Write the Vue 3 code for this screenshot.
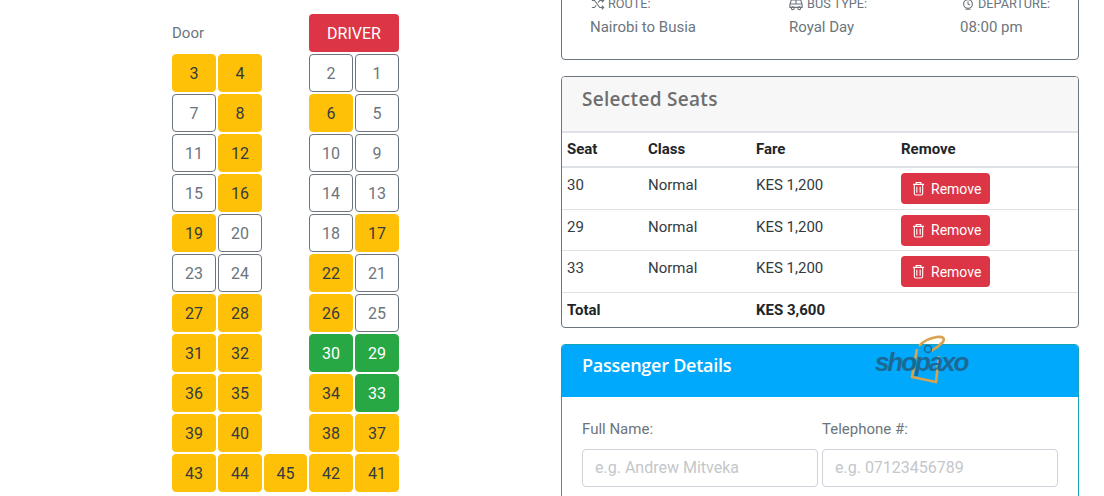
<script setup>
const seats = [
  { n: 3, s: 'y' }, { n: 4, s: 'y' }, null, { n: 2 }, { n: 1 },
  { n: 7 }, { n: 8, s: 'y' }, null, { n: 6, s: 'y' }, { n: 5 },
  { n: 11 }, { n: 12, s: 'y' }, null, { n: 10 }, { n: 9 },
  { n: 15 }, { n: 16, s: 'y' }, null, { n: 14 }, { n: 13 },
  { n: 19, s: 'y' }, { n: 20 }, null, { n: 18 }, { n: 17, s: 'y' },
  { n: 23 }, { n: 24 }, null, { n: 22, s: 'y' }, { n: 21 },
  { n: 27, s: 'y' }, { n: 28, s: 'y' }, null, { n: 26, s: 'y' }, { n: 25 },
  { n: 31, s: 'y' }, { n: 32, s: 'y' }, null, { n: 30, s: 'g' }, { n: 29, s: 'g' },
  { n: 36, s: 'y' }, { n: 35, s: 'y' }, null, { n: 34, s: 'y' }, { n: 33, s: 'g' },
  { n: 39, s: 'y' }, { n: 40, s: 'y' }, null, { n: 38, s: 'y' }, { n: 37, s: 'y' },
  { n: 43, s: 'y' }, { n: 44, s: 'y' }, { n: 45, s: 'y' }, { n: 42, s: 'y' }, { n: 41, s: 'y' }
]
const picked = ['30', '29', '33']
</script>

<template>
  <div class="page">
    <section class="deck">
      <div class="door">Door</div>
      <div class="driver">DRIVER</div>
      <template v-for="(seat, i) in seats" :key="i">
        <div v-if="seat" class="seat" :class="seat.s">{{ seat.n }}</div>
        <div v-else></div>
      </template>
    </section>

    <section class="side">
      <div class="card trip">
        <div class="trip-col">
          <div class="lab">
            <svg class="tic" viewBox="0 0 16 16" fill="none" stroke="currentColor" stroke-width="1.3">
              <path d="M1 4h3l6 8h4M1 12h3l2-2.6M8 6.4 10 4h4M12.4 2 14.5 4l-2.1 2M12.4 10l2.1 2-2.1 2" />
            </svg>
            ROUTE:
          </div>
          <div class="val">Nairobi to Busia</div>
        </div>
        <div class="trip-col">
          <div class="lab">
            <svg class="tic bus" viewBox="0 0 16 16" fill="none" stroke="currentColor" stroke-width="1.2">
              <path d="M3 3h10l1.5 5v3h-13V8zM1.500 7.500h13M8 3v4.500" />
              <circle cx="4.500" cy="12" r="1.500" />
              <circle cx="11.500" cy="12" r="1.500" />
            </svg>
            BUS TYPE:
          </div>
          <div class="val">Royal Day</div>
        </div>
        <div class="trip-col">
          <div class="lab">
            <svg class="tic" viewBox="0 0 16 16" fill="none" stroke="currentColor" stroke-width="1.3">
              <circle cx="8" cy="8" r="5" />
              <path d="M8 5v3l2 1M5 14h6M6 1.500h4" />
            </svg>
            DEPARTURE:
          </div>
          <div class="val">08:00 pm</div>
        </div>
      </div>

      <div class="card picked">
        <h3 class="head">Selected Seats</h3>
        <table>
          <thead>
            <tr><th class="c1">Seat</th><th class="c2">Class</th><th class="c3">Fare</th><th>Remove</th></tr>
          </thead>
          <tbody>
            <tr v-for="s in picked" :key="s">
              <td>{{ s }}</td>
              <td>Normal</td>
              <td>KES 1,200</td>
              <td>
                <button class="rm">
                  <svg class="trash" viewBox="0 0 14 16" fill="none" stroke="currentColor" stroke-width="1.200">
                    <path d="M1 3.500h12M4.500 3.500V1.500h5v2M2.500 3.500v10a1.500 1.500 0 0 0 1.500 1.500h6a1.500 1.500 0 0 0 1.500-1.500v-10M5.200 6v6.500M8.800 6v6.500" />
                  </svg>
                  Remove
                </button>
              </td>
            </tr>
            <tr class="sum"><td>Total</td><td></td><td>KES 3,600</td><td></td></tr>
          </tbody>
        </table>
      </div>

      <div class="card pass">
        <h3 class="head blue">Passenger Details</h3>
        <div class="logo">
          <svg class="tag" viewBox="0 0 45 50" fill="none" stroke="#d9a24f" stroke-width="2.600">
            <path d="M12 15 7 43l24 5 3-26" />
            <path d="M14 12Q20 5 32 3q9-1 6 5-6 6-12 9" />
            <circle cx="23" cy="15" r="3.500" stroke="#1b6a96" stroke-width="1.500" />
          </svg>
          <span class="logo-text">shopaxo</span>
        </div>
        <div class="form">
          <label>Full Name:<input placeholder="e.g. Andrew Mitveka" /></label>
          <label>Telephone #:<input placeholder="e.g. 07123456789" /></label>
        </div>
      </div>
    </section>
  </div>
</template>

<style>
html, body { margin: 0; background: #fff; overflow: hidden; }
</style>

<style scoped>
.page {
  display: flex;
  align-items: flex-start;
  width: 1104px;
  height: 496px;
  overflow: hidden;
  padding-left: 172px;
  box-sizing: border-box;
  font-family: Roboto, "Liberation Sans", sans-serif;
  color: #6c757d;
}
.deck {
  display: grid;
  grid-template-columns: 44px 44px 43px 44px 44px;
  grid-auto-rows: 38px;
  gap: 2px;
  margin-top: 14px;
}
.door {
  grid-column: 1 / 4;
  font-size: 15px;
  line-height: 38px;
}
.driver {
  grid-column: 4 / 6;
  background: #dc3545;
  color: #fff;
  border-radius: 4px;
  font-size: 16px;
  line-height: 39px;
  text-align: center;
}
.seat {
  border: 1px solid #6c757d;
  border-radius: 4px;
  box-sizing: border-box;
  font-size: 16px;
  line-height: 37px;
  text-align: center;
}
.seat.y { background: #ffc107; border-color: #ffc107; color: #343a40; }
.seat.g { background: #28a745; border-color: #28a745; color: #fff; }

.side {
  width: 518px;
  margin-left: 162px;
  flex: none;
}
.card {
  border: 1px solid #6c757d;
  border-radius: 4px;
  box-sizing: border-box;
  overflow: hidden;
  margin-bottom: 16px;
}
.trip {
  display: grid;
  grid-template-columns: 199px 171px 1fr;
  height: 100px;
  margin-top: -40px;
  padding: 34px 0 0 28px;
}
.lab {
  display: flex;
  align-items: center;
  gap: 3px;
  font-size: 12.7px;
  line-height: 18px;
  height: 18px;
  padding-left: 1px;
}
.tic { width: 14px; height: 14px; }
.tic.bus { width: 16px; height: 15px; margin-left: -2px; }
.val {
  font-size: 15px;
  line-height: 22px;
  margin-top: 3px;
}
.head {
  margin: 0;
  font-family: "Open Sans", sans-serif;
  font-weight: 600;
  font-size: 19px;
  letter-spacing: 0.3px;
  line-height: 24px;
  padding: 10px 20px 20px;
  background: #f7f7f7;
  color: #6e6e6e;
  border-bottom: 2px solid #dee2e6;
}
.picked { height: 252px; }
table {
  width: 100%;
  border-collapse: collapse;
  font-size: 15px;
  color: #212529;
}
th { text-align: left; font-weight: 700; padding: 5px 5px 6px; height: 22px; line-height: 22px; border-bottom: 2px solid #dee2e6; }
.c1 { width: 71px; }
.c2 { width: 98px; }
.c3 { width: 135px; }
td { padding: 6px 5px 0; height: 34.5px; vertical-align: top; line-height: 22px; border-bottom: 1px solid #dee2e6; }
tbody td { color: #343a40; }
.sum td { font-weight: 700; color: #212529; border-bottom: 0; height: 28px; padding-top: 6px; }
.rm {
  display: flex;
  align-items: center;
  gap: 6px;
  width: 89px;
  height: 31px;
  margin-top: -1px;
  padding: 0 0 0 11px;
  background: #dc3545;
  border: 0;
  border-radius: 4px;
  color: #fff;
  font: 14px Roboto, sans-serif;
  box-sizing: border-box;
}
.trash { width: 13px; height: 15px; }
.pass {
  position: relative;
  overflow: visible;
  border-color: #17a2b8;
  height: 220px;
}
.head.blue {
  background: #00a9fb;
  color: #fff;
  border: 0;
  border-radius: 3px 3px 0 0;
  font-size: 18px;
  letter-spacing: -0.25px;
  padding: 8px 20px 20px;
}
.logo {
  position: absolute;
  left: 313px;
  top: -8px;
  width: 95px;
  height: 50px;
}
.logo-text {
  position: absolute;
  left: 0;
  top: 10px;
  font: italic 700 26px "Liberation Sans", sans-serif;
  letter-spacing: -2.100px;
  color: #1b6a96;
}
.tag {
  position: absolute;
  left: 30px;
  top: -3px;
  width: 45px;
  height: 50px;
}
.form {
  display: grid;
  grid-template-columns: 236px 236px;
  gap: 4px;
  padding: 21px 20px 0;
}
label {
  display: block;
  font-size: 15px;
  line-height: 22px;
}
input {
  display: block;
  width: 100%;
  height: 38px;
  margin-top: 9px;
  padding: 0 12px 2px;
  border: 1px solid #ced4da;
  border-radius: 4px;
  box-sizing: border-box;
  font: 16px Roboto, sans-serif;
  outline: 0;
}
input::placeholder { color: #c4c7ca; opacity: 1; }
</style>
